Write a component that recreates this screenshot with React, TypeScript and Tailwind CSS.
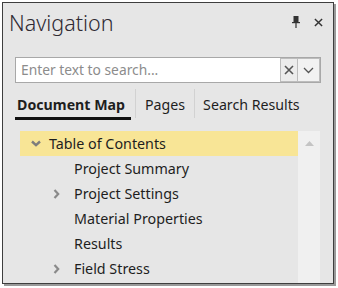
const font = { fontFamily: '"Noto Sans", "Open Sans", sans-serif' };

const PinIcon = () => (
  <svg width="8" height="12" viewBox="0 0 8 12" fill="#333">
    <rect x="1.5" y="0" width="5" height="6" />
    <rect x="0" y="6" width="8" height="1.2" />
    <rect x="3.4" y="7" width="1.2" height="5" />
  </svg>
);

const CloseIcon = ({ size = 9, color = "#333" }: { size?: number; color?: string }) => (
  <svg width={size} height={size} viewBox="0 0 10 10" stroke={color} strokeWidth="1.6" fill="none">
    <path d="M1 1 L9 9 M9 1 L1 9" />
  </svg>
);

const ChevronDown = () => (
  <svg width="10" height="7" viewBox="0 0 10 7" fill="none" stroke="#7d7d7d" strokeWidth="2.4">
    <path d="M1 1.5 L5 5.2 L9 1.5" />
  </svg>
);

const ChevronRight = () => (
  <svg width="7" height="10" viewBox="0 0 7 10" fill="none" stroke="#8a8a8a" strokeWidth="2.2">
    <path d="M1.5 1 L5.2 5 L1.5 9" />
  </svg>
);

type Node = { label: string; expandable?: boolean };

const children: Node[] = [
  { label: "Project Summary" },
  { label: "Project Settings", expandable: true },
  { label: "Material Properties" },
  { label: "Results" },
  { label: "Field Stress", expandable: true },
];

export default function App() {
  return (
    <div className="w-[338px] h-[288px] bg-white pt-[2px] pl-[2px]" style={font}>
      <div className="w-[332px] h-[282px] border border-[#3e3e3e] bg-[#e6e6e6] shadow-[2px_2px_0_#9a9a9a] flex flex-col">
        {/* header */}
        <div className="h-[40px] flex items-center justify-between pl-[6px] pr-[10px]">
          <span className="text-[21.5px] font-light text-[#2f2a33] leading-none">Navigation</span>
          <div className="flex items-center gap-[14px] mt-[-2px]">
            <PinIcon />
            <CloseIcon />
          </div>
        </div>

        {/* search */}
        <div className="mt-[14px] mx-[12px] h-[26px] bg-white border border-[#a8a8a8] flex items-center">
          <span className="flex-1 pl-[5px] text-[13.8px] text-[#8c8c8c] leading-none">Enter text to search...</span>
          <div className="h-full flex">
            <div className="w-[18px] h-full border border-[#bdbdbd] bg-[#ececec] flex items-center justify-center">
              <CloseIcon size={10} color="#555" />
            </div>
            <div className="w-[22px] h-full border border-l-0 border-[#bdbdbd] bg-[#f2f2f2] flex items-center justify-center">
              <svg width="11" height="7" viewBox="0 0 11 7" fill="none" stroke="#555" strokeWidth="1.3">
                <path d="M1 1 L5.5 5.5 L10 1" />
              </svg>
            </div>
          </div>
        </div>

        {/* tabs */}
        <div className="mt-[6px] h-[31px] flex items-stretch pl-[12px] text-[14.2px] text-[#1e1e1e]">
          <div className="relative flex items-center pl-[2px] pr-[6px]">
            <span className="font-bold">Document Map</span>
            <div className="absolute left-0 right-0 bottom-0 h-[3px] bg-[#111]" />
          </div>
          <div className="w-px bg-[#d2d2d2] ml-[4px] mb-[2px]" />
          <div className="flex items-center pl-[9px] pr-[9px]">Pages</div>
          <div className="w-px bg-[#d2d2d2] mb-[2px]" />
          <div className="flex items-center px-[8px]">Search Results</div>
        </div>

        {/* tree */}
        <div className="mt-[11px] ml-[17px] mr-[13px] flex-1 flex min-h-0">
          <div className="flex-1 text-[14.3px] text-[#1e1e1e]">
            <div className="h-[25px] bg-[#f8e596] flex items-center">
              <div className="w-[29px] flex justify-center pl-[2px]">
                <ChevronDown />
              </div>
              <span>Table of Contents</span>
            </div>
            {children.map((n) => (
              <div key={n.label} className="h-[25px] flex items-center">
                <div className="w-[54px] flex justify-end pr-[14px]">
                  {n.expandable && <ChevronRight />}
                </div>
                <span>{n.label}</span>
              </div>
            ))}
          </div>
          <div className="w-[22px] bg-[#f0f0f0] flex justify-center pt-[10px]">
            <svg width="9" height="5" viewBox="0 0 9 5" fill="#c4c4c4">
              <path d="M0 5 L4.5 0 L9 5 Z" />
            </svg>
          </div>
        </div>
      </div>
    </div>
  );
}
